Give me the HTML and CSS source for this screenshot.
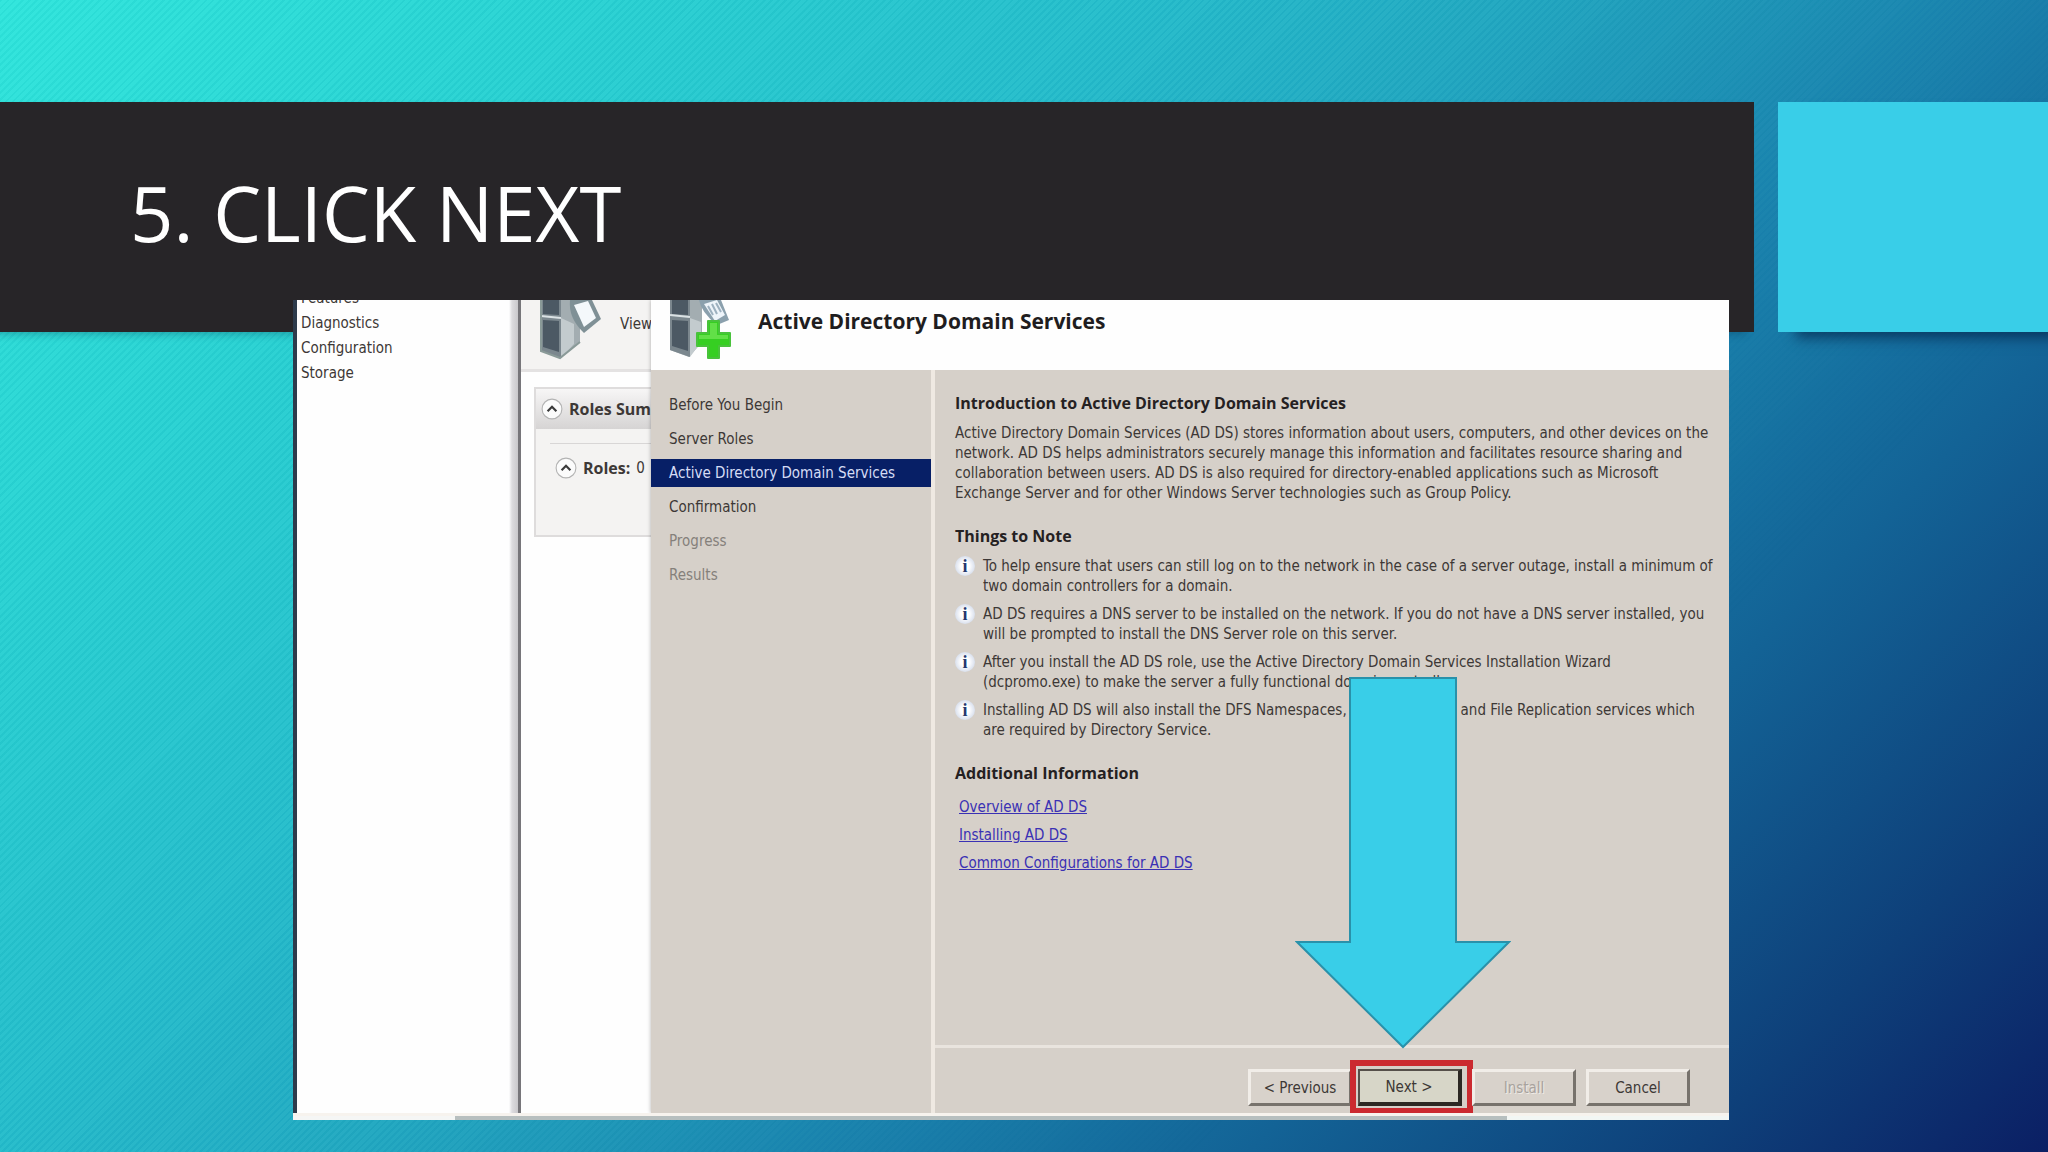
FILE: index.html
```html
<!DOCTYPE html>
<html lang="en">
<head>
<meta charset="utf-8">
<title>5. Click Next</title>
<link rel="stylesheet" href="styles.css">
</head>
<body>
<main class="slide">
  <header class="banner">
    <h1 class="banner-title">5. CLICK NEXT</h1>
    <div class="banner-accent"></div>
  </header>

  <section class="shot">
    <div class="shot-body">
      <nav class="tree">
        <ul class="tree-list">
          <li>Features</li>
          <li>Diagnostics</li>
          <li>Configuration</li>
          <li>Storage</li>
        </ul>
      </nav>

      <div class="manager">
        <div class="manager-head">
          <svg class="server" viewBox="0 0 64 60" aria-hidden="true">
            <path d="M1 0H23L40 0V42L20 58L1 51Z" fill="#a3adb1"/>
            <path d="M1 0H21V58L1 51Z" fill="#7b878e"/>
            <path d="M3 0H19V15L3 14ZM3 20L19 21V52L3 47Z" fill="#4c5964"/>
            <path d="M1 16L21 18" stroke="#dbe2e5" stroke-width="2"/>
            <path d="M21 18L34 24V44L21 58Z" fill="#c3cbce"/>
            <path d="M30 0Q28 18 44 33L61 19L52 0Z" fill="#7f9096"/>
            <path d="M34 5L48 1L56 18L44 27Z" fill="#f4f8fb"/>
            <path d="M1 0V51L20 58L40 42" fill="none" stroke="#8a9a98" stroke-width="2"/>
          </svg>
          <span>View</span>
        </div>
        <div class="summary">
          <div class="summary-head">
            <svg class="chevron" viewBox="0 0 20 20" aria-hidden="true"><circle cx="10" cy="10" r="9" fill="#fbfbfb" stroke="#b3b3b3"/><path d="M6 12L10 8L14 12" fill="none" stroke="#3a3a3a" stroke-width="2"/></svg>
            <b>Roles Sum</b>
          </div>
          <div class="summary-row">
            <svg class="chevron" viewBox="0 0 20 20" aria-hidden="true"><circle cx="10" cy="10" r="9" fill="#fbfbfb" stroke="#b3b3b3"/><path d="M6 12L10 8L14 12" fill="none" stroke="#3a3a3a" stroke-width="2"/></svg>
            <b>Roles:</b><span>0</span>
          </div>
        </div>
      </div>

      <div class="wizard">
        <div class="wizard-head">
          <svg class="server" viewBox="0 0 64 60" aria-hidden="true">
            <path d="M1 0H33V42L20 57L1 50Z" fill="#a3adb1"/>
            <path d="M1 0H21V57L1 50Z" fill="#7b878e"/>
            <path d="M3 0H19V15L3 14ZM3 20L19 21V51L3 46Z" fill="#4c5964"/>
            <path d="M1 15L21 17" stroke="#dbe2e5" stroke-width="2"/>
            <path d="M21 18L32 22V42L21 57Z" fill="#c3cbce"/>
            <path d="M30 0Q32 12 48 25L60 20L52 0Z" fill="#8ba0ad"/>
            <path d="M35 4L48 0L56 15L46 21Z" fill="#eef4fa"/>
            <path d="M39 6L44 15M43 4L48 14M47 3L52 12" stroke="#9db0bf" stroke-width="2"/>
            <path d="M39 21H50V33H61V46H50V58H39V46H28V33H39Z" fill="#36cf22" stroke="#49c23c" stroke-width="2" stroke-linejoin="round"/>
            <path d="M41 23H48V35H59V39H30V35H41Z" fill="#62e048"/>
          </svg>
          <h2 class="wizard-title">Active Directory Domain Services</h2>
        </div>
        <ol class="steps">
          <li>Before You Begin</li>
          <li>Server Roles</li>
          <li class="step-current">Active Directory Domain Services</li>
          <li>Confirmation</li>
          <li class="step-later">Progress</li>
          <li class="step-later">Results</li>
        </ol>
        <div class="page">
          <h3>Introduction to Active Directory Domain Services</h3>
          <p>Active Directory Domain Services (AD DS) stores information about users, computers, and other devices on the<br>network. AD DS helps administrators securely manage this information and facilitates resource sharing and<br>collaboration between users. AD DS is also required for directory-enabled applications such as Microsoft<br>Exchange Server and for other Windows Server technologies such as Group Policy.</p>
          <h3>Things to Note</h3>
          <ul class="notes">
            <li><span class="info">i</span><span>To help ensure that users can still log on to the network in the case of a server outage, install a minimum of<br>two domain controllers for a domain.</span></li>
            <li><span class="info">i</span><span>AD DS requires a DNS server to be installed on the network. If you do not have a DNS server installed, you<br>will be prompted to install the DNS Server role on this server.</span></li>
            <li><span class="info">i</span><span>After you install the AD DS role, use the Active Directory Domain Services Installation Wizard<br>(dcpromo.exe) to make the server a fully functional domain controller.</span></li>
            <li><span class="info">i</span><span>Installing AD DS will also install the DFS Namespaces, DFS Replication and File Replication services which<br>are required by Directory Service.</span></li>
          </ul>
          <h3>Additional Information</h3>
          <ul class="links">
            <li><a href="#overview">Overview of AD DS</a></li>
            <li><a href="#installing">Installing AD DS</a></li>
            <li><a href="#configurations">Common Configurations for AD DS</a></li>
          </ul>
        </div>
        <div class="actions">
          <button type="button" class="btn">&lt; Previous</button>
          <button type="button" class="btn btn-next">Next &gt;</button>
          <button type="button" class="btn" disabled>Install</button>
          <button type="button" class="btn">Cancel</button>
        </div>
      </div>
    </div>
    <div class="scroll-edge"></div>
    <svg class="arrow" viewBox="0 0 216 372" aria-hidden="true">
      <path d="M55 1H161V265H214L108 370L2 265H55Z" fill="#39cee8" stroke="#2991aa" stroke-width="2"/>
    </svg>
  </section>
</main>
</body>
</html>
```
FILE: styles.css
```css
* { box-sizing: border-box; }

body {
  margin: 0;
  font-family: "DejaVu Sans Condensed", "Open Sans", sans-serif;
  font-size: 15px;
  line-height: 20px;
  color: #3d3836;
}

h1, h2, h3, p, ul, ol { margin: 0; padding: 0; }
ul, ol { list-style: none; }

.slide {
  position: relative;
  min-height: 100vh;
  padding-top: 102px;
  overflow: hidden;
  background: linear-gradient(135deg, #2ee6dc 0%, #28d3d3 18%, #24bccb 36%, #20a6c0 48%, #1980ac 63%, #136396 75%, #0e3f79 89%, #0b1f64 100%);
}

.slide::before {
  content: "";
  position: absolute;
  inset: 0;
  background: repeating-linear-gradient(135deg, rgba(0, 70, 110, 0.04) 0 2px, rgba(255, 255, 255, 0.03) 2px 5px);
  mask-image: linear-gradient(135deg, #000 40%, transparent 75%);
}

/* Title band */
.banner {
  position: relative;
  display: flex;
  gap: 24px;
  height: 230px;
}

.banner-title {
  flex: 1;
  padding: 57px 130px;
  background: #272528;
  color: #fff;
  font: 400 76px/108px "Open Sans", sans-serif;
  box-shadow: -6px 4px 8px -2px rgba(0, 40, 60, 0.3);
}

.banner-accent {
  width: 270px;
  background: #39cee8;
  box-shadow: 14px 10px 12px -4px rgba(0, 25, 60, 0.6);
}

/* Server Manager window */
.shot {
  position: relative;
  margin: -32px 319px 32px 293px;
  background: #fefefe;
}

.shot-body {
  display: flex;
  height: 813px;
  overflow: hidden;
}

.tree {
  flex: none;
  width: 228px;
  padding-left: 4px;
  border-left: 4px solid #2d3b4c;
  border-right: 3px solid #77767a;
  background: linear-gradient(to left, #c9c8cb 0, #dddcdf 6px, #fefefe 9px);
}

.tree-list { margin-top: -14px; }
.tree-list li { height: 25px; line-height: 24px; }

.manager {
  flex: none;
  width: 130px;
  overflow: hidden;
  white-space: nowrap;
}

.manager-head {
  display: flex;
  gap: 16px;
  height: 72px;
  padding-left: 19px;
  border-bottom: 3px solid #e4e2e2;
  background: #f4f3f2;
  line-height: 48px;
}

.server {
  flex: none;
  width: 64px;
  height: 60px;
}

.summary {
  height: 150px;
  margin: 15px 0 0 13px;
  border: 2px solid #dedcdc;
  border-right: 0;
  background: #f4f3f2;
}

.summary-head, .summary-row {
  display: flex;
  align-items: center;
  gap: 6px;
}

.summary-head {
  height: 40px;
  padding-left: 5px;
  background: linear-gradient(#f7f6f6, #d6d4d4);
}

.summary-row {
  height: 48px;
  margin: 14px 0 0 14px;
  padding-left: 5px;
  border-top: 1px solid #d8d6d6;
}

.summary b, .page h3, .wizard-title { font-family: "Open Sans", sans-serif; }
.summary b { font-size: 16px; }

.chevron {
  flex: none;
  width: 22px;
  height: 22px;
}

/* Add Roles wizard */
.wizard {
  flex: 1;
  display: grid;
  grid-template: 70px 1fr 68px / 284px 1fr;
  background: #d6d0c9;
  box-shadow: 0 0 4px rgba(0, 0, 0, 0.3);
}

.wizard-head {
  grid-column: 1 / 3;
  display: flex;
  gap: 25px;
  padding-left: 18px;
  background: #fefefe;
}

.wizard-title {
  color: #1f1d20;
  font-size: 21px;
  line-height: 42px;
}

.steps {
  grid-row: 2 / 4;
  display: grid;
  align-content: start;
  gap: 6px;
  padding-top: 21px;
  border-right: 4px solid #efe9e2;
}

.steps li {
  height: 28px;
  padding-left: 18px;
  line-height: 28px;
}

.steps .step-current { background: #071f66; color: #d5dcf5; }
.steps .step-later { color: #85807b; }

.page {
  padding: 23px 0 0 20px;
  white-space: nowrap;
}

.page h3 {
  color: #252122;
  font-size: 16px;
  line-height: 20px;
}

.page p { margin: 10px 0 23px; }

.notes {
  display: grid;
  gap: 8px;
  margin: 10px 0 23px;
}

.notes li { display: flex; gap: 8px; }

.info {
  flex: none;
  width: 20px;
  height: 20px;
  border-radius: 50%;
  background: radial-gradient(#fff 30%, #e3e8f2 60%, #bcc6d8);
  color: #26386e;
  font: bold 18px/20px "Liberation Serif", serif;
  text-align: center;
}

.links {
  display: grid;
  gap: 8px;
  padding: 14px 0 0 4px;
}

.links a { color: #3a31b4; }

.actions {
  display: flex;
  align-items: flex-start;
  justify-content: flex-end;
  gap: 10px;
  padding: 21px 39px 0 0;
  border-top: 3px solid #e9e4de;
}

.btn {
  position: relative;
  width: 104px;
  height: 37px;
  padding: 1px 0 0;
  border: 3px solid;
  border-color: #f1ede8 #77726c #77726c #f1ede8;
  background: #d8d2cb;
  color: #3d3836;
  font: inherit;
}

.btn:disabled { color: #a8a29d; text-shadow: 1px 1px #efebe6; }

.btn-next {
  margin-left: -4px;
  border-color: #55504a #2c2823 #2c2823 #55504a;
  border-width: 2px 4px 4px 2px;
  background: #d7d6c8;
}

/* Red marker drawn round the Next button */
.btn-next::after {
  content: "";
  position: absolute;
  inset: -11px -15px -12px -10px;
  border: 6px solid #cb2a30;
}

.scroll-edge {
  height: 7px;
  border-top: 3px solid #f7f3ee;
  background: linear-gradient(to right, #f5f6f5 162px, #b7bfbf 162px calc(100% - 222px), #f2f6f4 0);
}

.arrow {
  position: absolute;
  right: 218px;
  bottom: 71px;
  width: 216px;
  height: 372px;
}
```
